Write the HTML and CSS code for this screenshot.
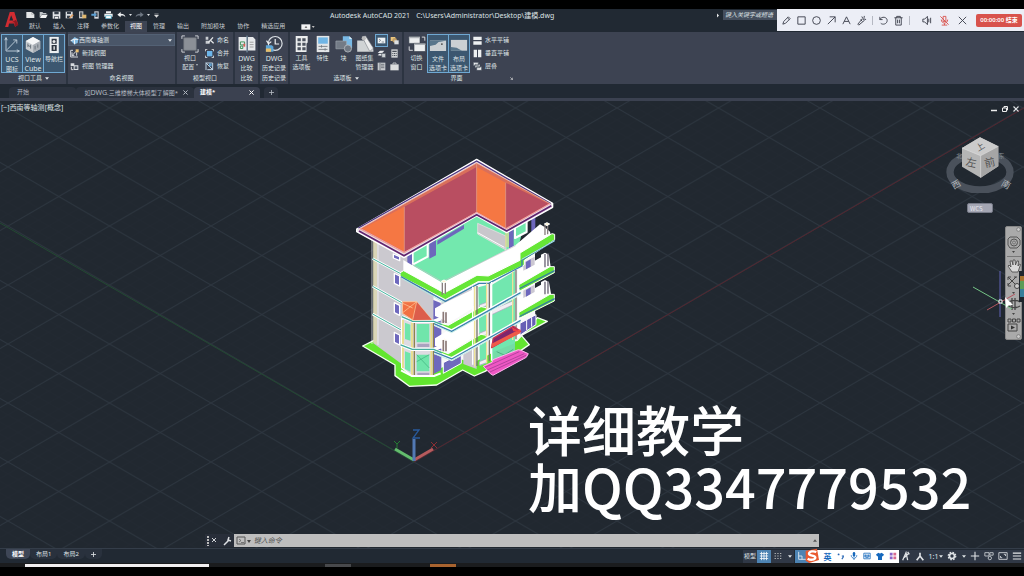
FILE: index.html
```html
<!DOCTYPE html>
<html lang="zh-CN">
<head>
<meta charset="utf-8">
<title>Autodesk AutoCAD 2021</title>
<link rel="stylesheet" href="styles.css">
</head>
<body>
<svg class="defs" aria-hidden="true">
  <symbol id="caret" viewBox="0 0 6 4"><path d="M0 0h6L3 4z" fill="currentColor"/></symbol>
  <symbol id="close" viewBox="0 0 6 6"><path d="M.5.5l5 5M5.500.5l-5 5" stroke="currentColor" stroke-width="1.2"/></symbol>
  <symbol id="plus" viewBox="0 0 8 8"><path d="M4 0v8M0 4h8" stroke="currentColor" stroke-width="1.3"/></symbol>
</svg>
<div class="app">
  <header class="top">
    <button class="logo" aria-label="应用程序菜单"><svg viewBox="0 0 42 48"><path d="M3 45L16 3h13l11 36-9 6-3-10H14l-2 10z" fill="#d12c32"/><path d="M20 12l-5 15h11z" fill="#212933"/><path d="M12 32h17l2 13 9-6-6-14-11 6z" fill="#8c1820"/></svg></button>
    <div class="top-main">
      <div class="titlebar">
        <div class="quick">
          <button aria-label="新建"><svg viewBox="0 0 27 24"><path d="M1 3h16l8 7v11H1z" fill="#e4e6e8"/><path d="M17 3v7h8" fill="none" stroke="#777"/></svg></button>
          <button aria-label="打开"><svg viewBox="0 0 27 24"><path d="M2 20V3h8l3 3h9v4H9z" fill="#bfc3c7"/><path d="M8 11h18l-5 10H3z" fill="#f2f3f4"/></svg></button>
          <button aria-label="保存"><svg viewBox="0 0 27 24"><path d="M2 2h23v21H2z" fill="#dfe2e5"/><path d="M7 2h13v8H7zM7 15h13v8H7z" fill="#353e49"/><path d="M9 17h9v6H9z" fill="#eee"/></svg></button>
          <button aria-label="另存为"><svg viewBox="0 0 27 24"><path d="M2 2h21v20H2z" fill="#d6dadd"/><path d="M6 3h12v6H6zM6 14h9v8H6z" fill="#353e49"/><path d="M12 20L22 9l4 4-10 9z" fill="#e0a268"/></svg></button>
          <button aria-label="打开移动版"><svg viewBox="0 0 27 24"><path d="M3 1h13v21H3z" fill="#c6c8ca"/><path d="M6 4h7v14H6z" fill="#555b63"/><path d="M13 11h12v11H13z" fill="#e0b66c"/></svg></button>
          <button aria-label="保存移动版"><svg viewBox="0 0 27 24"><path d="M10 1h13v22H10z" fill="#d8dadd"/><path d="M13 4h7v14h-7z" fill="#3f4956"/><path d="M1 8h9V4l7 7-7 7v-4H1z" fill="#5ca0d4"/></svg></button>
          <button aria-label="打印"><svg viewBox="0 0 27 24"><path d="M6 1h15v6H6zM1 8h25v9H1z" fill="#eff1f2"/><path d="M5 14h17v9H5z" fill="#fff" stroke="#39a3c4" stroke-width="2"/></svg></button>
          <button aria-label="放弃"><svg viewBox="0 0 27 24"><path d="M1 11l10-8v5c9 0 14 4 14 11-3-5-7-6-14-5v5z" fill="#f0f2f3"/></svg></button>
          <svg class="mini"><use href="#caret"/></svg>
          <button class="dim" aria-label="重做"><svg viewBox="0 0 27 24"><path d="M26 11L16 3v5C7 8 2 12 2 19c3-5 7-6 14-5v5z" fill="#6f7884"/></svg></button>
          <svg class="mini"><use href="#caret"/></svg>
          <button class="more" aria-label="自定义快速访问工具栏"><svg viewBox="0 0 12 12"><path d="M1 2h10M1 5h10L6 11z" stroke="#ddd" stroke-width="1" fill="#ddd"/></svg></button>
        </div>
        <h1 class="title"><span>Autodesk AutoCAD 2021</span><span>C:\Users\Administrator\Desktop\建模.dwg</span></h1>
        <div class="search"><svg viewBox="0 0 4 8"><path d="M0 0l4 4-4 4z" fill="#e8eaec"/></svg><input type="text" aria-label="搜索" placeholder="键入关键字或短语"></div>
      </div>
      <nav class="menu">
        <button>默认</button><button>插入</button><button>注释</button><button>参数化</button><button class="on">视图</button><button>管理</button><button>输出</button><button>附加模块</button><button>协作</button><button>精选应用</button>
        <button class="fold" aria-label="最小化功能区"><svg viewBox="0 0 42 18"><path d="M1 1h27v16H1z" fill="#f2f3f4"/><path d="M11 11l4-5 4 5z" fill="#444"/><path d="M32 6h9l-4 6z" fill="#bbb"/></svg></button>
      </nav>
    </div>
  </header>

  <section class="ribbon" aria-label="视图功能区">
    <div class="panel p-tools">
      <div class="body joined">
        <button class="big sel"><svg viewBox="0 0 60 60"><path d="M10 8v42h42M6 14l4-9 4 9M46 46l9 4-9 4M13 46l32-33M34 13h12v12" fill="none" stroke="#c4d3df" stroke-width="3"/></svg><span><span class="lat">UCS</span><br>图标</span></button>
        <button class="big sel"><svg viewBox="0 0 60 60"><path d="M6 17L30 3l24 14v26L30 57 6 43z" fill="#c8ccd0"/><path d="M6 17L30 3l24 14-24 13z" fill="#f5f6f7"/><path d="M30 30l24-13v26L30 57z" fill="#a8aeb5"/><path d="M13 25v12M22 29v13M13 31l9 5M37 33v12M46 28v11" stroke="#666f78" stroke-width="3"/></svg><span class="lat">View<br>Cube</span></button>
        <button class="big sel"><svg viewBox="0 0 60 60"><path d="M15 3h31v54H15z" fill="#eceff1"/><path d="M22 9h17v17H22zM22 30h17v20H22z" fill="#2f3742"/><circle cx="30" cy="18" r="5" fill="#e8eaeb"/><path d="M28 34h5v12h-5z" fill="#ddd"/></svg><span>导航栏</span></button>
      </div>
      <h2>视口工具 <svg class="car"><use href="#caret"/></svg></h2>
    </div>
    <div class="panel p-views">
      <div class="body stack">
        <div class="combo"><svg class="i" viewBox="0 0 27 27"><path d="M2 14L14 3l11 7-2 11-10 4z" fill="#85bde4"/><path d="M2 14l11-4 1 15M13 10l12 0" stroke="#f3f5f6" stroke-width="3" fill="none"/></svg><select aria-label="命名视图"><option>西南等轴测</option></select><svg class="car"><use href="#caret"/></svg></div>
        <button class="row"><svg class="i" viewBox="0 0 27 27"><path d="M2 4v20h22M2 4h7M20 20V10M6 20l12-13M6 10v10h7" stroke="#d6dade" stroke-width="3" fill="none"/><path d="M17 1h9v9h-9z" fill="#ecc071"/></svg>新建视图</button>
        <button class="row"><svg class="i" viewBox="0 0 27 27"><path d="M2 4h11v8H2zM11 10h14v14H11z" fill="#d9dce0"/><path d="M14 13h8v8h-8z" fill="#4f5866"/><path d="M4 14v9h6" stroke="#ddd" stroke-width="3" fill="none"/></svg>视图 管理器</button>
      </div>
      <h2>命名视图</h2>
    </div>
    <div class="panel p-ports">
      <div class="body">
        <button class="big"><svg viewBox="0 0 60 60"><path d="M9 9h42v42H9z" fill="#8c9097" stroke="#686d75" stroke-width="2"/><path d="M3 13V3h10M47 3h10v10M57 47v10H47M13 57H3V47" fill="none" stroke="#dcdfe2" stroke-width="3"/></svg><span>视口<br>配置 <svg class="dot"><use href="#caret"/></svg></span></button>
        <div class="stack">
          <button class="row"><svg class="i" viewBox="0 0 27 27"><path d="M2 2h8v9H2zM2 14h12v9H2z" fill="#c9cdd2"/><path d="M10 20L24 4M18 14l8 8" stroke="#e5e7e9" stroke-width="4"/></svg>命名</button>
          <button class="row"><svg class="i" viewBox="0 0 27 27"><path d="M6 6h16v16H6z" fill="#6db5e9"/><path d="M1 7V1h6M20 1h6v6M26 20v6h-6M7 26H1v-6" fill="none" stroke="#ddd" stroke-width="3"/></svg>合并</button>
          <button class="row"><svg class="i" viewBox="0 0 27 27"><path d="M2 2l22 22M3 24V3h20v20M7 23h16" stroke="#bfd4e4" stroke-width="3" fill="none"/><path d="M12 4h8v9h-8z" fill="#5e9dcb"/></svg>恢复</button>
        </div>
      </div>
      <h2>模型视口</h2>
    </div>
    <div class="panel p-cmp">
      <div class="body"><button class="big"><svg viewBox="0 0 60 60"><path d="M2 7h27v45H2zM33 7h17l8 8v37H33z" fill="#e7e9eb"/><path d="M30 2v56" stroke="#8ba9bc" stroke-width="3"/><path d="M8 23h14v10H8zM8 37h8v8H8z" fill="none" stroke="#348b50" stroke-width="3"/><path d="M18 29h6v10h-6z" fill="#d85d57"/><path d="M39 24h13M39 32h13M39 40h13" stroke="#999" stroke-width="3"/></svg><span><span class="lat">DWG</span><br>比较</span></button></div>
      <h2>比较</h2>
    </div>
    <div class="panel p-hist">
      <div class="body"><button class="big"><svg viewBox="0 0 60 60"><circle cx="34" cy="28" r="23" fill="none" stroke="#dce1e5" stroke-width="4"/><path d="M34 13v17h13M5 19l7 10 9-7" fill="none" stroke="#f0f2f3" stroke-width="4"/><path d="M3 34h20l5 5v17H3z" fill="#5fa6d6"/><path d="M3 45h17v11H3z" fill="#e9bd68"/></svg><span><span class="lat">DWG</span><br>历史记录</span></button></div>
      <h2>历史记录</h2>
    </div>
    <div class="panel p-pal">
      <div class="body">
        <button class="big"><svg viewBox="0 0 60 60"><path d="M9 3h40v22l-4 3v29H9z" fill="#eceeef"/><path d="M15 11h11v10H15zM31 11h11v10H31zM15 26h11v10H15zM31 26h11v10H31zM15 41h11v10H15zM31 41h11v10H31z" fill="#4c535f"/></svg><span>工具<br>选项板</span></button>
        <button class="big"><svg viewBox="0 0 60 60"><path d="M9 3h42v54H9z" fill="#e3e5e7"/><path d="M14 8h32v21H14z" fill="#70b5e5"/><path d="M15 38h30M15 48h30M25 34v8M37 44v8" stroke="#747a82" stroke-width="3"/></svg><span>特性</span></button>
        <button class="big"><svg viewBox="0 0 60 60"><path d="M26 4h22l9 9v30H26z" fill="#79b9e5"/><path d="M48 4v9h9" fill="#dcecf5"/><path d="M3 20h35v26H3z" fill="#737b86" stroke="#a1a7ae" stroke-width="2"/><circle cx="43" cy="45" r="12" fill="#707883" stroke="#b1b5ba" stroke-width="3"/></svg><span>块</span></button>
        <button class="big"><svg viewBox="0 0 60 60"><path d="M4 18h22l32 30v8H4z" fill="#d0d3d5"/><path d="M20 6l12-3 26 41-12 11z" fill="#ededee" stroke="#7b8087" stroke-width="2"/><circle cx="26" cy="11" r="7" fill="#bbb"/></svg><span>图纸集<br>管理器</span></button>
        <div class="tiles">
          <button class="sel" aria-label="命令行"><svg viewBox="0 0 27 27"><path d="M2 5h23v17H2z" fill="#eef1f3"/><path d="M6 9l5 4-5 4M14 18h7" stroke="#56606c" stroke-width="2" fill="none"/></svg></button>
          <button aria-label="标记集"><svg viewBox="0 0 27 27"><path d="M2 3h14v12H2z" fill="#ebc57d"/><circle cx="14" cy="13" r="7" fill="#c1a067"/><path d="M13 13h13v12H13z" fill="#dcdfe2"/></svg></button>
          <button aria-label="图层"><svg viewBox="0 0 27 27"><path d="M2 12L9 5h13l-6 7zM2 19l5-5h12l-5 6z" fill="#e8eaed"/><path d="M14 13h12v13H14z" fill="#ccd1d5" stroke="#444c58" stroke-width="2"/></svg></button>
          <button aria-label="快速计算器"><svg viewBox="0 0 27 27"><path d="M4 1h19v25H4z" fill="#cfd2d4"/><path d="M7 5h13v4H7zM7 12h3v3H7zM12 12h3v3h-3zM17 12h3v3h-3zM7 18h3v3H7zM12 18h3v3h-3zM17 18h3v3h-3z" fill="#4b515a"/></svg></button>
          <button aria-label="外部参照"><svg viewBox="0 0 27 27"><path d="M2 2h23v23H2z" fill="#c6c9cd"/><path d="M9 3v21M12 7h10M12 12h10M12 17h10" stroke="#4b515a" stroke-width="2"/></svg></button>
          <button aria-label="图纸"><svg viewBox="0 0 27 27"><path d="M1 7h25v18H1z" fill="#dcddde"/><path d="M9 7V3h9v4" stroke="#bdc0c3" stroke-width="3" fill="none"/></svg></button>
        </div>
      </div>
      <h2>选项板 <svg class="car"><use href="#caret"/></svg></h2>
    </div>
    <div class="panel p-ui">
      <div class="body">
        <button class="big"><svg viewBox="0 0 60 60"><path d="M3 6h37v22H3zM20 28h38v27H20z" fill="#eceeef" stroke="#323a46" stroke-width="2"/><path d="M3 6h37v5H3zM20 28h38v5H20z" fill="#aeb2b7"/><path d="M46 7h10v12M4 38v13h12" fill="none" stroke="#e5e7e9" stroke-width="3"/></svg><span>切换<br>窗口</span></button>
        <div class="joined">
          <button class="big sel"><svg viewBox="0 0 60 60"><path d="M3 15h54v35H3z" fill="#cbd0d3"/><path d="M3 15h54L43 18 32 20 22 29 3 33z" fill="#59768b"/><circle cx="43" cy="27" r="3" fill="#444"/></svg><span>文件<br>选项卡</span></button>
          <button class="big sel"><svg viewBox="0 0 60 60"><path d="M3 13h54v36H3z" fill="#cbd0d3"/><path d="M3 37l19 2 18 10H3z" fill="#59768b"/></svg><span>布局<br>选项卡</span></button>
        </div>
        <div class="stack">
          <button class="row"><svg class="i" viewBox="0 0 27 27"><path d="M1 2h25v10H1zM1 16h25v10H1z" fill="#eef0f1"/></svg>水平平铺</button>
          <button class="row"><svg class="i" viewBox="0 0 27 27"><path d="M2 2h10v23H2zM15 2h10v23H15z" fill="#eef0f1"/></svg>垂直平铺</button>
          <button class="row"><svg class="i" viewBox="0 0 27 27"><path d="M1 1h15v10H1zM6 7h15v10H6zM11 14h15v11H11z" fill="#eef0f1" stroke="#434b58" stroke-width="2"/></svg>层叠</button>
        </div>
      </div>
      <h2>界面<svg class="launch" viewBox="0 0 9 9"><path d="M1 1l6 6M8 2v6H2" fill="none" stroke="#ddd" stroke-width="2"/></svg></h2>
    </div>
  </section>

  <nav class="files">
    <button class="home">开始</button>
    <button class="doc"><span>如<span class="lat">DWG</span>.三维楼梯大体模型了解图*</span><svg class="x"><use href="#close"/></svg></button>
    <button class="doc on"><b>建模*</b><svg class="x"><use href="#close"/></svg></button>
    <button class="add" aria-label="新图形"><svg class="x"><use href="#plus"/></svg></button>
  </nav>

  <main class="canvas">
    <svg class="scene" aria-label="三维楼房模型">
      <defs>
        <pattern id="grid" x="414" y="462" width="101.5" height="59" patternUnits="userSpaceOnUse">
          <path d="M0 0l101.500 59M101.500 0L0 59" stroke="#2d3640" stroke-width="1" fill="none"/>
        </pattern>
        <pattern id="fine" x="414" y="462" width="20.300" height="11.800" patternUnits="userSpaceOnUse">
          <path d="M0 0l20.300 11.800M20.300 0L0 11.800" stroke="#232a33" stroke-width=".5" fill="none"/>
        </pattern>
      </defs>
      <g transform="translate(0 -101)">
        <rect y="101" width="100%" height="100%" fill="url(#fine)"/>
        <rect y="101" width="100%" height="100%" fill="url(#grid)"/>
        <path d="M414 462L0 223" stroke="#234a32"/>
        <path d="M414 462L1036 101" stroke="#54262f"/>
        <g transform="translate(350 260) scale(.3333)" stroke-linejoin="round">
          <!-- plinth -->
          <path d="M38 258l34-17 100 60 330-60 60-68 30 11-78 42 24 28-26 18-107 62-32 14-35-18-78 45-82 4-43-32v-32z" fill="#62e62f" stroke="#f4fff0" stroke-width="4"/>
          <!-- left wall -->
          <path d="M70-66l95 48 95 55v300L152 310 70 250z" fill="#cbc9cf"/>
          <path d="M72-60v308M78-56v308" stroke="#e9e3a0" stroke-width="3"/>
          <path d="M66-60v312M84-50v305" stroke="#fff" stroke-width="2"/>
          <g fill="#6e68bd" stroke="#fff" stroke-width="4"><path d="M133 40l16 8v30l-16-8zM133 128l16 8v30l-16-8zM133 217l16 8v30l-16-8zM130-18l19 8v12l-19-8z"/></g>
          <!-- facade -->
          <path d="M250 70L515-25H555V143L557 190L502 240L367 310L333 298L253 333z" fill="#f8f8f8"/>
          <path d="M250 120l24 10v200l-24 12z" fill="#6f69bd"/>
          <path d="M272 128l98-45v55l-98 55z" fill="#d0ccd4"/>
          <path d="M322 115l18-10v30l-18 10zM280 308l54-28v30l-54 30z" fill="#6f69bd" stroke="#fff" stroke-width="3"/>
          <path d="M340 265l40-20v82l-40-15z" fill="#cac6cf"/>
          <path d="M385 82l25-7v235l-20 8zM425 75l70-42v225l-70 45z" fill="#72e7af"/>
          <path d="M425 150l65-28v12l-65 30zM388 135l22-8v10l-22 8zM388 220l22-9v12l-22 8zM388 305l22-9v12l-22 8z" fill="#f1edf4" stroke="#aaa0b9" stroke-width="2"/>
          <path d="M510 190l48-26v30l-48 32z" fill="#665fb5" stroke="#fff" stroke-width="3"/>
          <path d="M530 180v30M545 172v28" stroke="#fff" stroke-width="3"/>
          <!-- right balconies -->
          <path d="M505 30l68-38v-8l12-6 12 6 6 44-98 54zM505 112l68-38v-8l12-6 12 6 8 46-100 54z" fill="#fff"/>
          <path d="M520 8l34-18v24l-34 18zM520 92l34-18v22l-34 18z" fill="#cbc7d2"/>
          <path d="M528 6l14-8v22l-14 8zM528 90l14-8v20l-14 8z" fill="#6d67bc"/>
          <path d="M505 75l95-55h13v18L508 94zM505 158l95-55h13v20l-105 52z" fill="#66e637" stroke="#fff" stroke-width="3"/>
          <path d="M506 87L614 32M506 171L614 116" stroke="#3779a5" stroke-width="4"/>
          <path d="M585-18v40M594-20v38M585 65v38M594 63v38" stroke="#696474" stroke-width="4"/>
          <!-- upper terrace -->
          <path d="M165-40L380-150l140 55-15 55-230 115-90-54z" fill="#73e8ae"/>
          <path d="M383-110l85 38v42l-85-48z" fill="#c9c7cc" stroke="#eee6e8" stroke-width="2"/>
          <path d="M383-82l80 44" stroke="#fff" stroke-width="3"/>
          <path d="M188-38l45-24v52l-45 24zM495-98l35-20v34l-35 18z" fill="#71e8ad" stroke="#fff" stroke-width="6"/>
          <path d="M238-60l20-8v54l-20 10zM172-12l14-6v36l-14-6zM262-58l80-48v12l-80 48zM477-88l14-8v55l-14 8zM544-128l12-8v48l-12 8z" fill="#6d67bc"/>
          <path d="M468-85v45M474-83v45" stroke="#ded78e" stroke-width="4"/>
          <path d="M160 0l117 68L497-45l73-62 14 8 16 14 4 16-94 68L285 110 160 38z" fill="#fff"/>
          <path d="M185 12l92 53 220-108" stroke="#c9bfc8" stroke-width="2" fill="none"/>
          <path d="M150 38l11-6 122 67 98-53 34 2 95-47v-22l96-58 8 2v16L523 1v14L417 65h-33L286 119 150 48z" fill="#66e637" stroke="#fff" stroke-width="3"/>
          <path d="M153 50l133 74 101-54h29l100-52v-18l98-58" stroke="#3b80ab" stroke-width="4" fill="none"/>
          <path d="M515-2l99-56M155 55l131 75" stroke="#b7e8e0" stroke-width="3"/>
          <path d="M277 68v36M286 68v34M585-105v30M593-103v26" stroke="#877d7d" stroke-width="4"/>
          <path d="M274 64l8-4 8 4-8 5zM583-108l8-4 8 4-8 5z" fill="#fff4ce" stroke="#fff" stroke-width="3"/>
          <!-- middle balconies -->
          <path d="M255 145l27-15 88-42v55l-72 45-43-20zM255 235l30-18 85-45v60l-72 45-43-20z" fill="#fff"/>
          <path d="M250 184l45 12 98-56 16 3v12l-105 56-54-22zM250 265l45 16 98-58 16 3v12l-105 56-54-22z" fill="#66e637" stroke="#fff" stroke-width="3"/>
          <g stroke="#8b7976" stroke-width="5"><path d="M280 155v34M288 157v32M280 240v34M288 242v32"/></g>
          <path d="M275 153l9-4 9 4M275 238l9-4 9 4" fill="#fff2cf" stroke="#fff" stroke-width="4"/>
          <!-- columns and bands -->
          <g stroke-width="4"><path d="M374 80v240M410 70v240M488 35v205" stroke="#eee397"/><path d="M381 78v240M418 70v234M498 30v208" stroke="#77736d"/><path d="M368 80v234M425 66v236M506 28v206" stroke="#fff"/></g>
          <path d="M250 190l55 24 207-116M250 275l55 22 207-116" stroke="#fff" stroke-width="12" fill="none"/>
          <path d="M250 190l55 24 207-116M250 275l55 22 207-116" stroke="#3b84ae" stroke-width="4" fill="none"/>
          <path d="M250 194l55 24 207-116M250 280l55 22 207-116" stroke="#a7e2d8" stroke-width="2" fill="none"/>
          <path d="M68-4l84 45M68 79l87 49M68 162l87 49" stroke="#fff" stroke-width="8"/>
          <path d="M68-4l84 45M68 79l87 49M68 162l87 49" stroke="#45b5a0" stroke-width="3"/>
          <!-- corner bay -->
          <path d="M155 170l34 13h60v166h-62l-32-26z" fill="#dedbe2" stroke="#fff" stroke-width="4"/>
          <path d="M165 188l16 6v48l-16-5zM200 192h38v55h-38zM165 274l16 6v55l-16-8zM200 284h38v50h-38z" fill="#70e5ab"/>
          <path d="M200 305l38-21M200 284l38 40" stroke="#3daf7c" stroke-width="2"/>
          <path d="M186 186v160M244 184v162M159 180v144" stroke="#eadf83" stroke-width="5"/>
          <path d="M193 186v162M250 184v162" stroke="#8e824e" stroke-width="4"/>
          <path d="M202 251h36v10h-36zM202 338h36v8h-36z" fill="#aaa3bf"/>
          <path d="M152 255l35 13h64l22-8M155 170l33 14h63l22-8" stroke="#fff" stroke-width="10" fill="none"/>
          <path d="M153 331l32 17h67l20-8" stroke="#fff" stroke-width="6" fill="none"/>
          <path d="M152 255l35 13h64l25 11M155 170l33 14h63l25 10" stroke="#44ae9e" stroke-width="4" fill="none"/>
          <path d="M158 125h42l45 54-57 1-31-20z" fill="#f17143" stroke="#f8c5a0" stroke-width="3"/>
          <path d="M200 125l45 54-57 1z" fill="#dc5d4b"/><path d="M200 125l-43 34M200 125l-12 55M158 130l30 14" stroke="#ffd0a2" stroke-width="2"/>
          <!-- entrance -->
          <path d="M430 235l60-36 22 15-87 49z" fill="#7d276d" stroke="#c93051" stroke-width="4"/>
          <path d="M425 251l86-44v13l-86 43z" fill="#ef5a49"/>
          <path d="M485 201l27 14-22-1z" fill="#f04045"/>
          <path d="M430 275l65-25v24l-65 34z" fill="#74dca7"/>
          <path d="M440 275l40 18M440 300l50-32" stroke="#389970" stroke-width="2"/>
          <path d="M400 319l26-12 3-8 76-30 8 2 22 10-6 11-100 54-8-5z" fill="#ef57c4" stroke="#ffb6ef" stroke-width="3"/>
          <path d="M405 322l103-47M412 330l111-49M420 336l108-50" stroke="#973a8b" stroke-width="2"/>
          <!-- roof -->
          <g transform="translate(0 -330)">
            <path d="M20 237L380 28l228 132v12l-138 76-90-50-218 125L20 245z" fill="#eadde7" stroke="#fff" stroke-width="4"/>
            <path d="M27 243l135 74 218-123 90 49 134-76" fill="none" stroke="#60246e" stroke-width="5"/>
            <path d="M25 234L380 33l222 128" fill="none" stroke="#4a347e" stroke-width="4"/>
            <path d="M29 237L380 39l221 122-131 76-90-50-218 122z" fill="#d96f5b" stroke="#f1b9a5" stroke-width="2"/>
            <path d="M36 236l127-66v135z" fill="#f57743"/><path d="M163 170L380 51v134L163 305z" fill="#b94e61"/>
            <path d="M380 51l87 47v136l-87-49z" fill="#f57743"/><path d="M467 98l129 63-129 73z" fill="#b94e61"/>
            <path d="M163 170v137M380 42v143M467 98v136" stroke="#e6a58f" stroke-width="2"/>
            <path d="M32 236l131 71 217-120 88 49 132-75" fill="none" stroke="#f0a4b2" stroke-width="3"/>
          </g>
        </g>
        <g fill="none"><path d="M414 460l-19-11" stroke="#63bd6d" stroke-width="3"/><path d="M414 460l19-11" stroke="#b65b5d" stroke-width="3"/><path d="M414 461v-22" stroke="#5279b4" stroke-width="3"/>
        <path d="M394 441l3 3 3-3M397 444v4" stroke="#247b32"/><path d="M431 442l6 6M437 442l-6 6" stroke="#8c2d32"/><path d="M413 430h6l-6 8h7" stroke="#285a9c" stroke-width="1.300"/></g>
      </g>
    </svg>
    <div class="viewlabel"><button>[−]</button><button>西南等轴测</button><button>[概念]</button></div>
    <div class="win">
      <button aria-label="最小化"><svg viewBox="0 0 6 6"><path d="M0 4.500h6" stroke="#eee" stroke-width="1.500"/></svg></button>
      <button aria-label="还原"><svg viewBox="0 0 6 6"><path d="M.5 2h4v3.500h-4zM2 2V.5h3.500V4H4.500" fill="none" stroke="#eee"/></svg></button>
      <button aria-label="关闭"><svg viewBox="0 0 6 6"><use href="#close"/></svg></button>
    </div>
    <div class="cube">
      <svg viewBox="60 40 219 180" role="img" aria-label="ViewCube">
        <ellipse cx="168" cy="157" rx="90" ry="54" fill="none" stroke="#4a515b" stroke-width="22"/>
        <g fill="#b0b4b8" font-size="27"><text x="83" y="204" transform="rotate(-30 96 195)">西</text><text x="232" y="204" transform="rotate(30 245 195)">南</text></g>
        <g fill="#868c92" font-size="18"><text x="97" y="116">北</text><text x="223" y="116">东</text></g>
        <path d="M114 85l54-32 55 27v60l-53 34-56-33z" fill="#b5b5b5"/>
        <path d="M114 85l54-32 55 27-53 28z" fill="#cbcbcb"/><path d="M170 108l53-28v60l-53 34z" fill="#a5a5a5"/>
        <path d="M114 85l56 23 53-28M170 108v66" stroke="#ddd" stroke-width="2" fill="none"/>
        <g fill="#555" font-size="32"><text x="126" y="140" transform="rotate(12 142 128)">左</text><text x="181" y="140" transform="rotate(-14 197 128)">前</text><text x="157" y="90" font-size="25" transform="rotate(-32 169 82)">上</text></g>
      </svg>
      <button class="wcs">WCS</button>
    </div>
    <div class="navbar">
      <svg class="knob" viewBox="0 0 8 8"><circle cx="4" cy="4" r="3" fill="#ccc" stroke="#666"/></svg>
      <button aria-label="控制盘"><svg viewBox="0 0 14 14"><path d="M3 2h7l3 3v5l-3 3H3l-2-3V4z" fill="none" stroke="#555"/><circle cx="7" cy="7.500" r="3.500" fill="none" stroke="#555"/><circle cx="7" cy="7.500" r="1.500" fill="none" stroke="#777"/></svg></button>
      <svg class="nc"><use href="#caret"/></svg><hr>
      <button aria-label="平移"><svg viewBox="0 0 14 14"><path d="M5 13L1 7l1-1 2 2-1-6h2l1 4V1h2l.5 5L10 2h1.500L11 7l1.500-2 1 .5L11 13z" fill="#d8d8d8" stroke="#444" stroke-width=".8"/></svg></button>
      <button aria-label="缩放"><svg viewBox="0 0 14 14"><path d="M1 1l8 8M9 1L1 9M1 4V1h3M7 1h3M1 7v3h3" stroke="#444" fill="none"/><circle cx="10" cy="10" r="2.500" fill="#ccc" stroke="#444"/></svg></button>
      <svg class="nc"><use href="#caret"/></svg>
      <button aria-label="动态观察"><svg viewBox="0 0 14 14"><path d="M5 1v12M8 1v12M1 5c4-2 9-2 12 0M1 9c4 2 9 2 12 0" stroke="#444" fill="none" stroke-width="1.300"/></svg></button>
      <svg class="nc"><use href="#caret"/></svg>
      <button aria-label="ShowMotion"><svg viewBox="0 0 14 14"><path d="M1 1h3v3H1zM5.500 1h3v3h-3zM10 1h3v3h-3zM1 6h9v7H1z" fill="none" stroke="#444"/><path d="M4 7.500L8 9.500 4 11.500z" fill="#333"/></svg></button>
      <svg class="knob" viewBox="0 0 8 8"><circle cx="4" cy="4" r="3" fill="#ccc" stroke="#666"/></svg>
    </div>
    <svg class="cross" viewBox="0 0 54 50" aria-hidden="true">
      <path d="M49 1h5v31h-5z" fill="#20262d"/><path d="M50 6h4v5h-4z" fill="#a8722f"/><path d="M50 11h4v8h-4z" fill="#5d9b56"/><path d="M50 19h4v8h-4z" fill="#377f9b"/>
      <path d="M30 1v46" stroke="#6063b4"/><path d="M3 17l39 22" stroke="#75c486"/><path d="M17 40l28-16" stroke="#b45660"/><path d="M29 30h3v3h-3z" fill="#212830" stroke="#fff"/>
      <path d="M35 27l1 11 3-3 4 0z" fill="#fff"/>
    </svg>
    <p class="caption">详细教学<br>加QQ3347779532</p>
    <div class="command">
      <div class="grip"><svg viewBox="0 0 29 13"><path d="M3 2v10" stroke="#bbb" stroke-width="2" stroke-dasharray="2 1"/><path d="M7 4l4 4M11 4L7 8" stroke="#d1d4d7"/><path d="M19 11l5-5M24 3l-1 3 3 1" stroke="#dde0e3" stroke-width="1.500" fill="none"/></svg></div>
      <label class="cmd"><svg viewBox="0 0 16 10"><path d="M1 1h8v7H1z" fill="none" stroke="#555"/><path d="M3 3l2 1.500L3 6M5 6.500h3" fill="none" stroke="#555" stroke-width=".7"/><path d="M11 4h4l-2 3z" fill="#444"/></svg><input type="text" aria-label="命令" placeholder="键入命令"><svg class="up" viewBox="0 0 6 4"><path d="M0 4h6L3 0z" fill="#555"/></svg></label>
    </div>
  </main>

  <footer class="status">
    <nav class="layouts"><button class="on">模型</button><button>布局1</button><button>布局2</button><button aria-label="新布局"><svg class="x"><use href="#plus"/></svg></button></nav>
    <div class="tray">
      <button class="w14 txt">模型</button>
      <button class="w14 lit" aria-label="栅格"><svg viewBox="0 0 12 12"><path d="M1 3h10M1 6h10M1 9h10M3 1v10M6 1v10M9 1v10" stroke="#f3f7fa"/></svg></button>
      <button class="w14" aria-label="捕捉"><svg viewBox="0 0 12 12"><path d="M2 3h8M2 6h8M2 9h8" stroke="#ccc" stroke-width="1.300" stroke-dasharray="1.300 2"/></svg></button>
      <button class="w8" aria-label="捕捉选项"><svg><use href="#caret"/></svg></button>
      <button class="w14 lit ortho" aria-label="正交"><svg viewBox="0 0 12 12"><path d="M2 1v9h9M2 6h4v4" fill="none" stroke="#e8eef3"/></svg></button>
      <div class="ime">
        <svg class="sogou" viewBox="0 0 48 48"><path d="M5 8l34-6 6 34-29 9-11-7z" fill="#e9592f"/><path d="M37 12c-9-4-21-2-22 5s20 5 19 12-15 8-23 3" fill="none" stroke="#fff" stroke-width="7"/></svg>
        <button>英</button>
        <button aria-label="标点"><svg viewBox="0 0 10 10"><circle cx="2" cy="3" r="1.200" fill="#2766b4"/><path d="M6 5h2c0 2-1 3-2 4" stroke="#2766b4" stroke-width="1.500" fill="none"/></svg></button>
        <button aria-label="语音"><svg viewBox="0 0 10 10"><rect x="3.500" y="0" width="3" height="6" rx="1.500" fill="#1769bd"/><path d="M1.500 4c0 5 7 5 7 0M5 7.500V10" stroke="#1769bd" fill="none"/></svg></button>
        <button aria-label="键盘"><svg viewBox="0 0 10 10"><path d="M1 1.500h8v7H1zM3 3v3M5 3v3M7 3v3M3 7h4M1 5h8" stroke="#1769bd" fill="none"/></svg></button>
        <button aria-label="皮肤"><svg viewBox="0 0 10 10"><path d="M3 1q2 2 4 0l3 2-1.500 2.500-1-.5v5h-5V5l-1 .5L0 3z" fill="#1769bd"/></svg></button>
        <button aria-label="工具箱"><svg viewBox="0 0 10 10"><path d="M1 1h3.500v3.500H1zM1 5.500h3.500V9H1z" fill="#8a64c8"/><path d="M5.500 1H9v3.500H5.500zM5.500 5.500H9V9H5.500z" fill="#d66b91"/></svg></button>
      </div>
      <button class="w14" aria-label="注释可见性"><svg viewBox="0 0 12 12"><path d="M2 11l4-9 2 9M4 8l5-5M8 1l2 3" stroke="#e0e3e6" stroke-width="1.500" fill="none"/></svg></button>
      <button class="w14" aria-label="自动缩放"><svg viewBox="0 0 12 12"><path d="M2 11l4-5 4 5M6 2v5" stroke="#e0e3e6" stroke-width="2" fill="none"/></svg></button>
      <button class="w18 lat">1:1 <svg class="car"><use href="#caret"/></svg></button>
      <button class="w14" aria-label="切换工作空间"><svg viewBox="0 0 12 12"><circle cx="6" cy="6" r="3" fill="none" stroke="#e0e3e6" stroke-width="2"/><circle cx="6" cy="6" r="4.500" fill="none" stroke="#e0e3e6" stroke-width="1.500" stroke-dasharray="2 1.530"/></svg></button>
      <button class="w8" aria-label="工作空间选项"><svg><use href="#caret"/></svg></button>
      <button class="w14" aria-label="注释监视器"><svg viewBox="0 0 12 12"><path d="M6 1v10M1 6h10" stroke="#e0e3e6" stroke-width="1.300"/></svg></button>
      <button class="w14" aria-label="隔离对象"><svg viewBox="0 0 12 12"><path d="M1 2h5v4H1zM7 2h4v3H7z" fill="none" stroke="#ccd1d5"/><circle cx="7" cy="8.500" r="2" fill="none" stroke="#ccd1d5"/></svg></button>
      <button class="w14" aria-label="全屏显示"><svg viewBox="0 0 12 12"><path d="M1 2h10v8H1zM3 8V6M3 8h2M9 4v2M9 4H7" fill="none" stroke="#dce0e3"/></svg></button>
      <button class="w14" aria-label="自定义"><svg viewBox="0 0 12 12"><path d="M1 2.500h10M1 6h10M1 9.500h10" stroke="#e5e7e9" stroke-width="1.300"/></svg></button>
    </div>
  </footer>
  <div class="taskbar"><span class="t-white"></span><span class="t-grey"></span><span class="t-orange"></span></div>

  <div class="recorder">
    <button aria-label="画笔"><svg viewBox="0 0 12 12"><path d="M2 10l1-3 5-5 2 2-5 5zM7 3l2 2"/></svg></button>
    <button aria-label="矩形"><svg viewBox="0 0 12 12"><path d="M2 2h8v8H2z"/></svg></button>
    <button aria-label="椭圆"><svg viewBox="0 0 12 12"><circle cx="6" cy="6" r="4.200"/></svg></button>
    <button aria-label="箭头"><svg viewBox="0 0 12 12"><path d="M2 10l8-8M4 2h6v6"/></svg></button>
    <button aria-label="文字"><svg viewBox="0 0 12 12"><path d="M2 10l4-8 4 8M3.500 7h5"/></svg></button>
    <button aria-label="荧光笔"><svg viewBox="0 0 12 12"><path d="M2 10l5-6 2 2-6 5zM6 2l2 1M9 1v2M8 4l3 1M5 5l2 2"/></svg></button>
    <i></i>
    <button aria-label="撤销"><svg viewBox="0 0 12 12"><path d="M2 2v3h3M2 5c2-4 8-3 8 1s-5 5-7 3"/></svg></button>
    <button aria-label="删除"><svg viewBox="0 0 12 12"><path d="M1.500 3h9M4 3V1.500h4V3M3 3v8h6V3M5 5v4M7 5v4"/></svg></button>
    <i></i>
    <button class="wide first" aria-label="声音"><svg viewBox="0 0 12 12"><path d="M2 4.500h2l3-3v9l-3-3H2zM8.500 4v4M10.500 3v6"/></svg></button>
    <button class="wide red" aria-label="麦克风"><svg viewBox="0 0 12 12"><path d="M4.500 1.500h3V7h-3zM2.500 5c0 5 7 5 7 0M6 9v2M3 11h6M1.500 1.500l9 9"/></svg></button>
    <button class="wide" aria-label="关闭录制"><svg viewBox="0 0 12 12"><path d="M2 2l8 8M10 2l-8 8"/></svg></button>
    <button class="stop">00:00:00 结束</button>
  </div>
</div>
</body>
</html>
```

FILE: styles.css
```css
* { box-sizing: border-box; }
body { margin: 0; background: #000; color: #dfe3e6; font: 7px/9px "Noto Sans", "Noto Sans CJK SC", sans-serif; }
button, input, select { margin: 0; padding: 0; border: 0; background: none; color: inherit; font: inherit; border-radius: 0; }
button { display: flex; align-items: center; justify-content: center; white-space: nowrap; flex: none; }
svg { display: block; flex: none; }
h1, h2, p { margin: 0; font: inherit; }
.lat { font-size: 7px; }
.defs { position: absolute; width: 0; height: 0; }
.app { position: relative; display: flex; flex-direction: column; height: 100vh; padding: 9px 0; overflow: hidden; }

.top { display: flex; background: #212933; height: 23px; }
.logo { width: 22px; align-items: flex-start; padding-top: 2px; }
.logo svg { width: 15px; height: 17px; }
.top-main { flex: 1; min-width: 0; }
.titlebar { display: flex; height: 12px; align-items: center; padding: 0 247px 0 2px; }
.quick { display: flex; align-items: center; width: 306px; }
.quick button { width: 13px; }
.quick button svg { width: 9px; height: 8px; }
.quick .mini { width: 3px; height: 2px; margin: 0 1px; }
.quick .more { width: 10px; }
.quick .more svg { width: 5px; height: 5px; }
.title { display: flex; gap: 6px; white-space: nowrap; }
.search { display: flex; align-items: center; gap: 4px; margin-left: auto; }
.search svg { width: 2px; height: 5px; }
.search input { width: 54px; height: 10px; background: #454e5d; padding: 0 2px; font-size: 6px; font-style: italic; }
::placeholder { color: inherit; opacity: 1; }
.menu { display: flex; height: 11px; padding-left: 1px; font-size: 6px; }
.menu button { padding: 0 6px; color: #c5c9ce; }
.menu .on { background: #3d4453; color: #fff; padding: 0 5px; }
.menu .fold svg { width: 14px; height: 6px; }
.menu .fold { padding: 0 10px; }

.ribbon { display: flex; height: 52px; background: #3d4352; padding-left: 1px; }
.panel { display: flex; flex-direction: column; border-right: 2px solid #2c3441; padding-top: 2px; }
.panel h2 { display: flex; justify-content: center; align-items: center; gap: 3px; height: 11px; margin-top: auto; font-size: 6px; position: relative; }
.body { display: flex; height: 39px; }
.p-tools { width: 67px; }
.p-views { width: 109px; }
.p-ports { width: 58px; }
.p-cmp { width: 25px; }
.p-hist { width: 30px; }
.p-pal { width: 114px; }
.p-ui { width: 111px; border: 0; }
.car { width: 4px; height: 3px; }
.joined { display: flex; }
.big { flex-direction: column; justify-content: flex-start; width: 21px; height: 39px; font-size: 6px; }
.big > svg { width: 20px; height: 20px; padding: 1px; }
.big span { white-space: nowrap; text-align: center; }
.sel { background: #3c5770; border: 1px solid #6fa8d2; }
.big.sel { width: 22px; margin-right: -1px; }
.dot { display: inline-block; width: 2px; height: 2px; vertical-align: 3px; }
.p-ports .big { width: 26px; }
.p-cmp .body, .p-hist .body { justify-content: center; }
.p-hist .big { width: 26px; }
.stack { display: flex; flex-direction: column; gap: 1px; }
.row { justify-content: flex-start; gap: 3px; height: 12px; padding-left: 2px; font-size: 6px; }
.i { width: 9px; height: 9px; }
.combo { display: flex; align-items: center; height: 12px; padding: 0 2px 0 1px; background: #4a5668; border: 1px solid #536174; }
.combo select { flex: 1; appearance: none; font-size: 6px; height: 10px; }
.p-pal .body { padding-left: 1px; }
.tiles { display: grid; grid-template-columns: 13px 13px; grid-auto-rows: 13px; }
.tiles svg { width: 9px; height: 9px; }
.p-ui .body { padding-left: 2px; }
.p-ui .stack { padding-left: 2px; }
.p-ui h2 { justify-content: center; padding-right: 6px; }
.launch { position: absolute; right: 2px; width: 3px; height: 3px; }

.files { display: flex; height: 17px; padding: 3px 0 0 9px; background: #212933; border-bottom: 3px solid #3b4150; color: #b4bac2; }
.files button { background: #2b323e; border-radius: 4px 4px 0 0; padding: 0 6px; }
.files .home { width: 67px; justify-content: flex-start; padding-left: 8px; font-size: 6px; }
.files .doc { gap: 5px; font-size: 6px; width: 118px; justify-content: flex-end; }
.files .on { background: #3b4150; color: #fff; width: 66px; justify-content: space-between; }
.files .add { width: 14px; margin-left: 4px; padding: 0; }
.x { width: 5px; height: 5px; }

.canvas { position: relative; flex: 1; min-height: 0; overflow: hidden; background: #212830; }
.scene { position: absolute; inset: 0; width: 100%; height: 100%; }
.viewlabel { position: absolute; left: 1px; top: 2px; display: flex; }
.win { position: absolute; right: 5px; top: 5px; display: flex; gap: 5px; }
.win svg { width: 6px; height: 6px; }
.cube { position: absolute; right: 7px; top: 32px; width: 73px; font-family: "Noto Sans CJK SC", sans-serif; }
.cube svg { width: 73px; height: 60px; }
.wcs { width: 26px; height: 10px; margin: 10px 0 0 23px; border: 1px solid #777b88; border-radius: 2px; background: #a4a6b3; color: #e6e7ee; font-size: 6px; justify-content: flex-start; padding-left: 2px; }
.navbar { position: absolute; right: 2px; top: 125px; width: 17px; height: 114px; display: flex; flex-direction: column; align-items: center; justify-content: space-between; background: #aaa; border: 1px solid #888; border-radius: 2px; color: #444; }
.navbar button svg { width: 14px; height: 14px; }
.navbar .knob { width: 5px; height: 5px; align-self: flex-end; }
.navbar .nc { width: 3px; height: 2px; }
.navbar hr { width: 14px; height: 1px; border: 0; margin: 0; background: #777; }
.cross { position: absolute; right: 0; top: 169px; width: 54px; height: 50px; }
.caption { position: absolute; left: 528px; bottom: 34px; color: #fff; font: 500 54px/57px "Noto Sans CJK SC", sans-serif; white-space: nowrap; }
.command { position: absolute; left: 20%; right: 20%; bottom: 1px; height: 13px; display: flex; }
.grip { width: 29px; background: #282e39; }
.grip svg { width: 29px; height: 13px; }
.cmd { flex: 1; display: flex; align-items: center; gap: 2px; background: #bebebe; color: #555; padding: 0 2px; }
.cmd svg { width: 16px; height: 10px; }
.cmd .up { width: 4px; height: 3px; }
.cmd input { flex: 1; min-width: 0; font-style: italic; }

.status { display: flex; justify-content: space-between; height: 15px; background: #212933; border-top: 1px solid #343d49; }
.layouts { display: flex; height: 10px; padding-left: 6px; font-size: 6px; }
.layouts button { padding: 0 6px; background: #29313d; border-radius: 0 0 5px 5px; }
.layouts .on { background: #3e4656; color: #fff; font-weight: 700; }
.tray { display: flex; align-items: center; }
.tray button { height: 13px; background: #303846; }
.tray .w14 { width: 14px; }
.tray .w14 svg { width: 10px; height: 10px; }
.tray .w8 { width: 9px; }
.tray .w8 svg { width: 4px; height: 3px; }
.tray .w18 { width: 18px; gap: 1px; }
.tray .txt { font-size: 6px; }
.tray .lit { background: #4d83b2; }
.tray .ortho { margin-left: 1px; }
.ime { position: relative; display: flex; align-items: center; height: 13px; padding-left: 12px; background: #fff; }
.ime button { width: 13px; background: none; color: #1769bd; font-size: 8px; font-weight: 700; }
.ime button svg { width: 8px; height: 8px; }
.sogou { position: absolute; left: -5px; top: -2px; width: 16px; height: 16px; }

.taskbar { display: flex; align-items: center; height: 4px; padding-left: 25px; background: #1b1c1e; }
.taskbar span { height: 3px; width: 26px; }
.taskbar .t-white { width: 184px; background: #f1eff1; }
.taskbar .t-grey { margin-left: 116px; background: #48494c; }
.taskbar .t-orange { margin-left: 79px; background: #a8632f; }

.recorder { position: absolute; right: 0; top: 9px; display: flex; align-items: center; width: 247px; height: 22px; padding-left: 2px; background: #eceef6; color: #3c404b; }
.recorder button { width: 15px; height: 20px; }
.recorder svg { width: 11px; height: 11px; fill: none; stroke: currentColor; stroke-width: 1; }
.recorder i { width: 1px; height: 9px; margin: 0 3px; background: #b5b8c2; }
.recorder .wide { width: 18px; }
.recorder .first { margin-left: 4px; }
.recorder .red { color: #d9534f; }
.recorder .stop { width: 46px; height: 13px; margin-left: auto; margin-right: 2px; border-radius: 2px; background: #d8524c; color: #fff; font-size: 6px; font-weight: 600; }
```
